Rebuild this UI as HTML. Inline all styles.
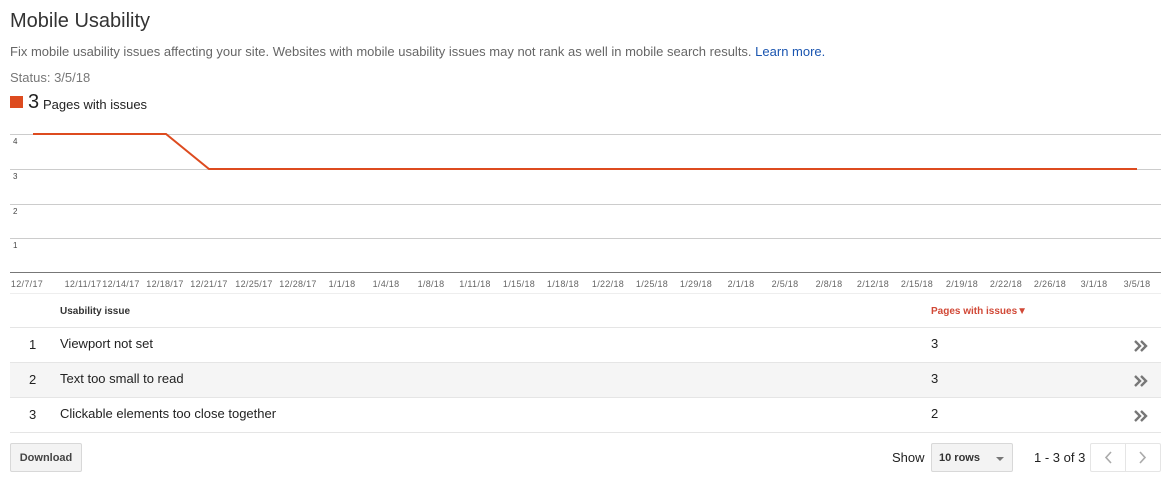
<!DOCTYPE html><html><head><style>
body{margin:0;width:1167px;height:478px;background:#fff;font-family:"Liberation Sans",Arial,sans-serif;position:relative;overflow:hidden}
.a{position:absolute;white-space:nowrap}
.d{position:absolute;top:279px;font-size:9px;letter-spacing:0.3px;color:#666;transform:translateX(-50%)}
.hl{position:absolute;left:10px;width:1151px;height:1px;background:#e5e5e5}
.n{font-size:13px;color:#222}
.chev{position:absolute;left:1133px}
</style></head><body>
<div class="a" style="left:10px;top:10px;font-size:20px;color:#333">Mobile Usability</div>
<div class="a" style="left:10px;top:44px;font-size:13px;color:#666">Fix mobile usability issues affecting your site. Websites with mobile usability issues may not rank as well in mobile search results. <span style="color:#1a55b0">Learn more.</span></div>
<div class="a" style="left:10px;top:70px;font-size:13px;color:#777">Status: 3/5/18</div>
<div class="a" style="left:10px;top:96px;width:13px;height:12px;background:#dd4b1f"></div>
<div class="a" style="left:28px;top:91px;font-size:20px;color:#222">3</div>
<div class="a" style="left:43px;top:97px;font-size:13px;color:#222">Pages with issues</div>
<div class="hl" style="top:134px;background:#ccc"></div>
<div class="hl" style="top:169px;background:#ccc"></div>
<div class="hl" style="top:204px;background:#ccc"></div>
<div class="hl" style="top:238px;background:#ccc"></div>
<div class="hl" style="top:272px;height:1px;background:#777"></div>
<div class="a" style="left:13px;top:137px;font-size:8px;color:#444">4</div>
<div class="a" style="left:13px;top:172px;font-size:8px;color:#444">3</div>
<div class="a" style="left:13px;top:207px;font-size:8px;color:#444">2</div>
<div class="a" style="left:13px;top:241px;font-size:8px;color:#444">1</div>
<svg class="a" style="left:0;top:0" width="1167" height="280"><polyline points="33,134 166,134 209,169 1137,169" fill="none" stroke="#dd4b1f" stroke-width="2"/></svg>
<div class="d" style="left:27px">12/7/17</div><div class="d" style="left:83px">12/11/17</div><div class="d" style="left:121px">12/14/17</div><div class="d" style="left:165px">12/18/17</div><div class="d" style="left:209px">12/21/17</div><div class="d" style="left:254px">12/25/17</div><div class="d" style="left:298px">12/28/17</div><div class="d" style="left:342px">1/1/18</div><div class="d" style="left:386px">1/4/18</div><div class="d" style="left:431px">1/8/18</div><div class="d" style="left:475px">1/11/18</div><div class="d" style="left:519px">1/15/18</div><div class="d" style="left:563px">1/18/18</div><div class="d" style="left:608px">1/22/18</div><div class="d" style="left:652px">1/25/18</div><div class="d" style="left:696px">1/29/18</div><div class="d" style="left:741px">2/1/18</div><div class="d" style="left:785px">2/5/18</div><div class="d" style="left:829px">2/8/18</div><div class="d" style="left:873px">2/12/18</div><div class="d" style="left:917px">2/15/18</div><div class="d" style="left:962px">2/19/18</div><div class="d" style="left:1006px">2/22/18</div><div class="d" style="left:1050px">2/26/18</div><div class="d" style="left:1094px">3/1/18</div><div class="d" style="left:1137px">3/5/18</div>
<div class="hl" style="top:293px;background:#eee"></div>
<div class="a" style="left:60px;top:306px;font-size:10px;font-weight:bold;color:#333">Usability issue</div>
<div class="a" style="left:931px;top:306px;font-size:10px;font-weight:bold;color:#d14836">Pages with issues▼</div>
<div class="hl" style="top:327px"></div>
<div class="a" style="left:10px;top:362px;width:1151px;height:35px;background:#f5f5f5"></div>
<div class="hl" style="top:362px"></div>
<div class="hl" style="top:397px"></div>
<div class="hl" style="top:432px"></div>
<div class="a n" style="left:29px;top:337px">1</div><div class="a n" style="left:60px;top:336px">Viewport not set</div><div class="a n" style="left:931px;top:336px">3</div>
<svg class="chev" style="top:340px" width="16" height="12"><polyline points="2,1 7,6 2,11" fill="none" stroke="#777" stroke-width="2.4"/><polyline points="8,1 13,6 8,11" fill="none" stroke="#777" stroke-width="2.4"/></svg>
<div class="a n" style="left:29px;top:372px">2</div><div class="a n" style="left:60px;top:371px">Text too small to read</div><div class="a n" style="left:931px;top:371px">3</div>
<svg class="chev" style="top:375px" width="16" height="12"><polyline points="2,1 7,6 2,11" fill="none" stroke="#777" stroke-width="2.4"/><polyline points="8,1 13,6 8,11" fill="none" stroke="#777" stroke-width="2.4"/></svg>
<div class="a n" style="left:29px;top:407px">3</div><div class="a n" style="left:60px;top:406px">Clickable elements too close together</div><div class="a n" style="left:931px;top:406px">2</div>
<svg class="chev" style="top:410px" width="16" height="12"><polyline points="2,1 7,6 2,11" fill="none" stroke="#777" stroke-width="2.4"/><polyline points="8,1 13,6 8,11" fill="none" stroke="#777" stroke-width="2.4"/></svg>
<div class="a" style="left:10px;top:443px;width:70px;height:27px;border:1px solid #d8d8d8;background:#f3f3f3;border-radius:2px;font-size:11px;font-weight:bold;color:#444;text-align:center;line-height:28px">Download</div>
<div class="a" style="left:892px;top:450px;font-size:13px;color:#222">Show</div>
<div class="a" style="left:931px;top:443px;width:80px;height:27px;border:1px solid #d8d8d8;background:#f3f3f3;border-radius:2px"><span class="a" style="left:7px;top:8px;font-size:11px;font-weight:bold;color:#333">10 rows</span><span class="a" style="left:64px;top:13px;border-left:4px solid transparent;border-right:4px solid transparent;border-top:4px solid #777"></span></div>
<div class="a" style="left:1034px;top:450px;font-size:13px;color:#222">1 - 3 of 3</div>
<div class="a" style="left:1090px;top:443px;width:69px;height:27px;border:1px solid #e5e5e5;border-radius:2px"><div class="a" style="left:34px;top:0;width:1px;height:27px;background:#e5e5e5"></div>
<svg class="a" style="left:0;top:0" width="69" height="27"><polyline points="20,8 15,13.5 20,19" fill="none" stroke="#aaa" stroke-width="1.6"/><polyline points="49,8 54,13.5 49,19" fill="none" stroke="#aaa" stroke-width="1.6"/></svg></div>
</body></html>
